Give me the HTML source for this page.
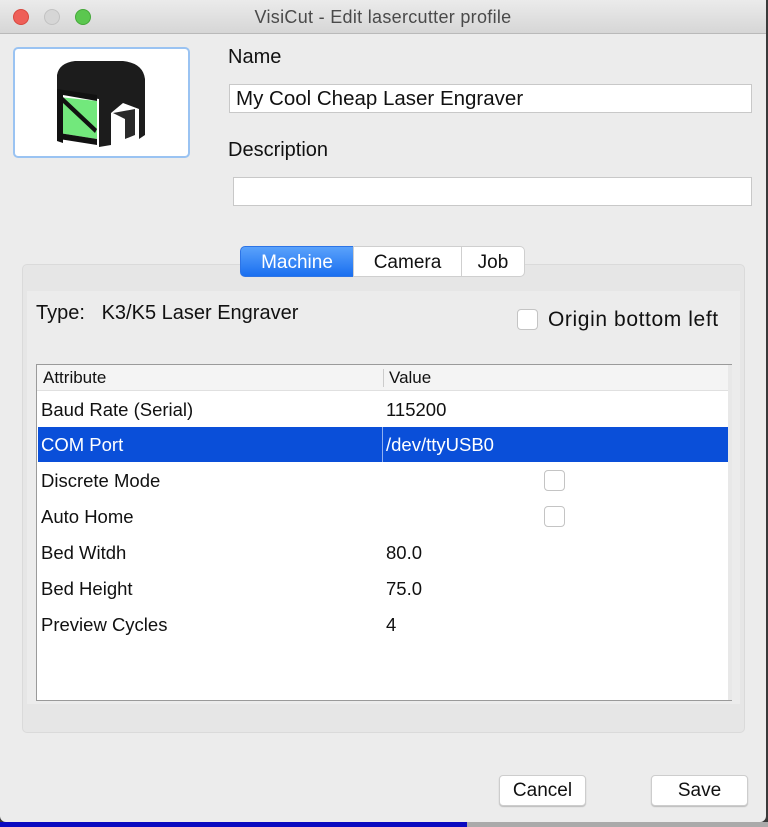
<!DOCTYPE html>
<html><head><meta charset="utf-8"><style>
*{box-sizing:border-box;margin:0;padding:0}
body{width:768px;height:827px;background:#3a3a3a;position:relative;overflow:hidden;font-family:"Liberation Sans",sans-serif;color:#111}
.win{position:absolute;left:0;top:0;width:766px;height:822px;background:#ececec;border-radius:0 0 6px 6px;overflow:hidden}
.title{position:absolute;left:0;top:0;width:766px;height:34px;background:linear-gradient(#ebebeb,#d6d6d6);border-bottom:1px solid #b9b9b9;text-align:center;font-size:18px;letter-spacing:0.3px;line-height:34px;color:#4a4a4a}
.dot{position:absolute;top:9px;width:16px;height:16px;border-radius:50%}
.a{position:absolute;white-space:nowrap}
.lbl{font-size:20px}
.inp{position:absolute;background:#fff;border:1px solid #c8c8c8}
.tab{position:absolute;top:246px;height:31px;font-size:19px;line-height:31px;text-align:center;background:#fff;border:1px solid #cfcfcf}
.row{position:absolute;left:38px;width:690px;height:35px;font-size:18.5px;line-height:35px}
.row span{position:absolute;left:3px}
.row b{font-weight:normal;position:absolute;left:348px}
.cb{position:absolute;width:21px;height:21px;border:1px solid #c4c4c4;border-radius:4px;background:#fff}
.btn{position:absolute;top:775px;height:31px;background:#fff;border:1px solid #cdcdcd;border-radius:4px;font-size:19px;line-height:29px;text-align:center;box-shadow:0 1px 1px #bbb}
</style></head><body>
<div style="position:absolute;left:0;top:822px;width:467px;height:5px;background:#0a0ac0"></div>
<div style="position:absolute;left:467px;top:822px;width:301px;height:5px;background:#aaa"></div>
<div class="win">
<div class="title">VisiCut - Edit lasercutter profile</div>
<div class="dot" style="left:13px;background:#ee5f58;border:1px solid #d8483f"></div>
<div class="dot" style="left:44px;background:#d6d6d6;border:1px solid #c2c2c2"></div>
<div class="dot" style="left:75px;background:#5bc74f;border:1px solid #45a83a"></div>

<div style="position:absolute;left:13px;top:47px;width:177px;height:111px;background:#fff;border:2px solid #9ac3f2;border-radius:5px">
<svg width="173" height="107" viewBox="0 0 173 107" style="position:absolute;left:0;top:0">
<path d="M44 48 L82 52 L82 90 L44 84 Z" fill="#72e87c"/>
<path d="M42 26 Q44 14 60 12 L108 12 Q128 14 130 30 L130 86 L124 90 L124 60 L108 54 L96 64 L96 96 L84 98 L84 50 L42 44 Z" fill="#1c1c1c"/>
<path d="M42 26 L42 92 L48 94 L48 46 L82 52 L82 46 L42 40 Z" fill="#111"/>
<path d="M44 84 L82 90 L82 96 L44 90 Z M48 48 L82 80 L80 84 L48 54 Z" fill="#111"/>
<path d="M98 64 L120 60 L120 86 L110 90 L110 70 Z" fill="#2a2a2a"/>
</svg></div>

<div class="a lbl" style="left:228px;top:46px">Name</div>
<div class="inp" style="left:229px;top:84px;width:523px;height:29px"></div>
<div class="a" style="left:236px;top:87px;font-size:20.5px">My Cool Cheap Laser Engraver</div>
<div class="a lbl" style="left:228px;top:139px">Description</div>
<div class="inp" style="left:233px;top:177px;width:519px;height:29px"></div>

<div style="position:absolute;left:22px;top:264px;width:723px;height:469px;background:#e6e6e6;border:1px solid #dadada;border-radius:5px">
<div style="position:absolute;left:4px;top:26px;width:713px;height:413px;background:#ececec"></div>
</div>
<div class="tab" style="left:240px;width:114px;background:linear-gradient(#5aa2fb,#1a6ff0);color:#fff;border-color:#2d74e6;border-radius:5px 0 0 5px">Machine</div>
<div class="tab" style="left:353px;width:109px">Camera</div>
<div class="tab" style="left:461px;width:64px;border-radius:0 5px 5px 0">Job</div>

<div class="a" style="left:36px;top:302px;font-size:20px">Type:&nbsp;&nbsp;&nbsp;K3/K5 Laser Engraver</div>
<div class="cb" style="left:517px;top:309px"></div>
<div class="a" style="left:548px;top:308px;font-size:21px;letter-spacing:0.6px">Origin bottom left</div>

<div style="position:absolute;left:36px;top:364px;width:696px;height:337px;background:#fff;border:1px solid #9a9a9a">
<div style="position:absolute;left:0;top:0;width:694px;height:26px;background:#f4f4f4;border-bottom:1px solid #e0e0e0"></div>
<div class="a" style="left:6px;top:3px;font-size:17px">Attribute</div>
<div style="position:absolute;left:346px;top:4px;width:1px;height:18px;background:#ccc"></div>
<div class="a" style="left:352px;top:3px;font-size:17px">Value</div>
<div style="position:absolute;left:691px;top:0;width:4px;height:335px;background:#e8e8e8"></div>
</div>
<div class="row" style="top:392px"><span>Baud Rate (Serial)</span><b>115200</b></div>
<div class="row" style="top:427px;background:#0a4fd9;color:#fff"><span>COM Port</span><i style="position:absolute;left:344px;top:0;width:1px;height:35px;background:#8fb0f0"></i><b>/dev/ttyUSB0</b></div>
<div class="row" style="top:463px"><span>Discrete Mode</span></div>
<div class="row" style="top:499px"><span>Auto Home</span></div>
<div class="row" style="top:535px"><span>Bed Witdh</span><b>80.0</b></div>
<div class="row" style="top:571px"><span>Bed Height</span><b>75.0</b></div>
<div class="row" style="top:607px"><span>Preview Cycles</span><b>4</b></div>
<div class="cb" style="left:544px;top:470px"></div>
<div class="cb" style="left:544px;top:506px"></div>

<div class="btn" style="left:499px;width:87px">Cancel</div>
<div class="btn" style="left:651px;width:97px">Save</div>
</div>
</body></html>
